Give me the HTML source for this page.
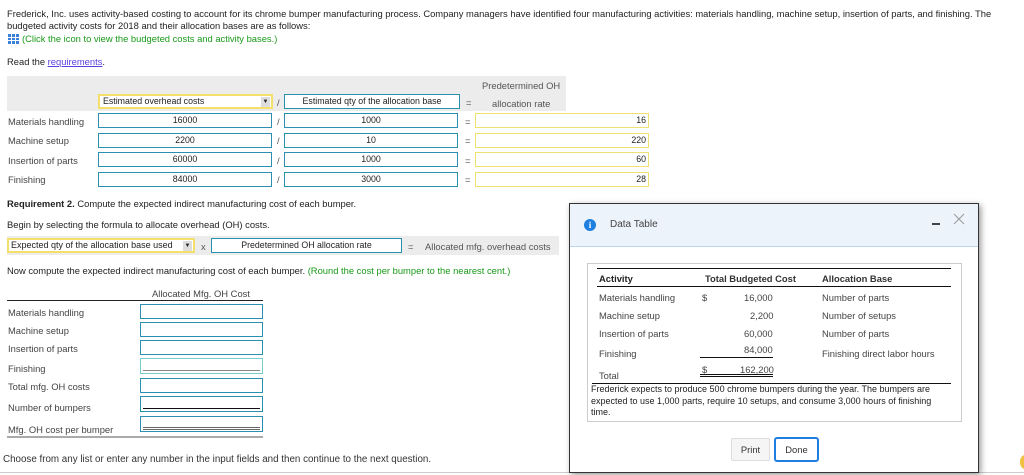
<!DOCTYPE html><html><head><style>
body{margin:0;width:1024px;height:475px;background:#fff;position:relative;overflow:hidden;font-family:"Liberation Sans",Arial,sans-serif;font-size:9.4px;color:#222}
.a{position:absolute;white-space:nowrap}
.in{position:absolute;box-sizing:border-box;border:1px solid #2a8fb0;background:#fff;height:15px;text-align:center;line-height:13px;font-size:8.8px}
.y{border:1px solid #f0e070}
.g{color:#555}
.t{color:#444}
</style></head><body>
<div class="a" style="left:7px;top:8px">Frederick, Inc. uses activity-based costing to account for its chrome bumper manufacturing process. Company managers have identified four manufacturing activities: materials handling, machine setup, insertion of parts, and finishing. The</div>
<div class="a" style="left:7px;top:20px">budgeted activity costs for 2018 and their allocation bases are as follows:</div>
<svg class="a" style="left:8px;top:34px" width="11" height="10"><rect x="0" y="0" width="11" height="10" fill="#3a7fd8"/><g stroke="#fff" stroke-width="1"><line x1="0" y1="3.5" x2="11" y2="3.5"/><line x1="0" y1="6.5" x2="11" y2="6.5"/><line x1="3.5" y1="0" x2="3.5" y2="10"/><line x1="7.5" y1="0" x2="7.5" y2="10"/></g></svg>
<div class="a" style="left:22px;top:33px;color:#1a9a1a">(Click the icon to view the budgeted costs and activity bases.)</div>
<div class="a" style="left:7px;top:56px">Read the <span style="color:#5a3ee0;text-decoration:underline">requirements</span>.</div>

<div class="a" style="left:7px;top:76px;width:559px;height:35px;background:#ececec"></div>
<div class="a g" style="left:482px;top:80px">Predetermined OH</div>
<div class="a g" style="left:492px;top:98px">allocation rate</div>
<div class="in y" style="left:98px;top:94px;width:175px;border:2px solid #f3df6a;text-align:left;padding-left:3px;line-height:11px">Estimated overhead costs<span style="position:absolute;right:1px;top:1px;width:9px;height:10px;background:#ddd;font-size:6px;line-height:10px;text-align:center">▼</span></div>
<div class="a g" style="left:277px;top:97px">/</div>
<div class="in" style="left:284px;top:94px;width:176px">Estimated qty of the allocation base</div>
<div class="a g" style="left:466px;top:97px">=</div>

<div class="a t" style="left:8px;top:116px">Materials handling</div>
<div class="a t" style="left:8px;top:135px">Machine setup</div>
<div class="a t" style="left:8px;top:155px">Insertion of parts</div>
<div class="a t" style="left:8px;top:174px">Finishing</div>
<div class="in" style="left:98px;top:113px;width:174px">16000</div>
<div class="in" style="left:98px;top:133px;width:174px">2200</div>
<div class="in" style="left:98px;top:152px;width:174px">60000</div>
<div class="in" style="left:98px;top:172px;width:174px">84000</div>
<div class="a g" style="left:277px;top:116px">/</div><div class="a g" style="left:277px;top:135px">/</div><div class="a g" style="left:277px;top:155px">/</div><div class="a g" style="left:277px;top:174px">/</div>
<div class="in" style="left:284px;top:113px;width:174px">1000</div>
<div class="in" style="left:284px;top:133px;width:174px">10</div>
<div class="in" style="left:284px;top:152px;width:174px">1000</div>
<div class="in" style="left:284px;top:172px;width:174px">3000</div>
<div class="a g" style="left:465px;top:116px">=</div><div class="a g" style="left:465px;top:135px">=</div><div class="a g" style="left:465px;top:155px">=</div><div class="a g" style="left:465px;top:174px">=</div>
<div class="in y" style="left:475px;top:113px;width:174px;text-align:right;padding-right:2px">16</div>
<div class="in y" style="left:475px;top:133px;width:174px;text-align:right;padding-right:2px">220</div>
<div class="in y" style="left:475px;top:152px;width:174px;text-align:right;padding-right:2px">60</div>
<div class="in y" style="left:475px;top:172px;width:174px;text-align:right;padding-right:2px">28</div>

<div class="a" style="left:7px;top:198px"><b>Requirement 2.</b> Compute the expected indirect manufacturing cost of each bumper.</div>
<div class="a" style="left:7px;top:219px">Begin by selecting the formula to allocate overhead (OH) costs.</div>
<div class="a" style="left:7px;top:236px;width:552px;height:19px;background:#ececec"></div>
<div class="in" style="left:7px;top:238px;width:188px;border:2px solid #f3df6a;text-align:left;padding-left:2px;line-height:11px;font-size:9px">Expected qty of the allocation base used<span style="position:absolute;right:1px;top:1px;width:9px;height:10px;background:#ddd;font-size:6px;line-height:10px;text-align:center">▼</span></div>
<div class="a g" style="left:201px;top:241px">x</div>
<div class="in" style="left:211px;top:238px;width:191px">Predetermined OH allocation rate</div>
<div class="a g" style="left:408px;top:241px">=</div>
<div class="a g" style="left:425px;top:241px">Allocated mfg. overhead costs</div>

<div class="a" style="left:7px;top:265px">Now compute the expected indirect manufacturing cost of each bumper. <span style="color:#1a9a1a">(Round the cost per bumper to the nearest cent.)</span></div>
<div class="a t" style="left:152px;top:288px">Allocated Mfg. OH Cost</div>
<div class="a" style="left:7px;top:300px;width:256px;height:1px;background:#222"></div>
<div class="a t" style="left:8px;top:307px">Materials handling</div>
<div class="a t" style="left:8px;top:325px">Machine setup</div>
<div class="a t" style="left:8px;top:343px">Insertion of parts</div>
<div class="a t" style="left:8px;top:363px">Finishing</div>
<div class="a t" style="left:8px;top:381px">Total mfg. OH costs</div>
<div class="a t" style="left:8px;top:402px">Number of bumpers</div>
<div class="a t" style="left:8px;top:424px">Mfg. OH cost per bumper</div>
<div class="in" style="left:140px;top:304px;width:123px"></div>
<div class="in" style="left:140px;top:322px;width:123px"></div>
<div class="in" style="left:140px;top:340px;width:123px"></div>
<div class="in" style="left:140px;top:358px;width:123px;height:16px;border-color:#7cc"><div style="position:absolute;left:2px;right:2px;top:11px;height:1px;background:#888"></div></div>
<div class="in" style="left:140px;top:378px;width:123px"></div>
<div class="in" style="left:140px;top:396px;width:123px;height:16px"><div style="position:absolute;left:2px;right:2px;top:11px;height:1px;background:#111"></div></div>
<div class="in" style="left:140px;top:416px;width:123px;height:16px"><div style="position:absolute;left:2px;right:2px;top:10px;height:3px;border-top:1px solid #666;border-bottom:1px solid #666;box-sizing:border-box"></div></div>
<div class="a" style="left:7px;top:436px;width:256px;height:2px;background:#aaa"></div>
<div class="a" style="left:3px;top:454px;font-size:9.8px;color:#333">Choose from any list or enter any number in the input fields and then continue to the next question.</div>
<div class="a" style="left:0;top:472px;width:1024px;height:1px;background:#ccc"></div>

<div class="a" style="left:569px;top:203px;width:410px;height:270px;box-sizing:border-box;border:1px solid #333;background:#fff;box-shadow:2px 2px 6px rgba(0,0,0,.4)"></div>
<div class="a" style="left:570px;top:204px;width:408px;height:42px;background:#edf3fb;border-bottom:1px solid #bcd6ef"></div>
<div class="a" style="left:584px;top:219px;width:12px;height:12px;border-radius:50%;background:#1f7fe0;color:#fff;font-weight:bold;font-size:9px;text-align:center;line-height:12px;font-family:'Liberation Serif',serif">i</div>
<div class="a" style="left:610px;top:219px;color:#444;font-size:10px">Data Table</div>
<div class="a" style="left:932px;top:223px;width:8px;height:2px;background:#444"></div>
<svg class="a" style="left:953px;top:213px" width="12" height="12"><path d="M1 1L11 11M11 1L1 11" stroke="#999" stroke-width="1"/></svg>
<div class="a" style="left:587px;top:263px;width:375px;height:159px;box-sizing:border-box;border:1px solid #ccc"></div>
<div class="a" style="left:597px;top:268px;width:354px;height:1px;background:#111"></div>
<div class="a" style="left:599px;top:273px;font-weight:bold;color:#222">Activity</div>
<div class="a" style="left:705px;top:273px;font-weight:bold;color:#333">Total Budgeted Cost</div>
<div class="a" style="left:822px;top:273px;font-weight:bold;color:#333">Allocation Base</div>
<div class="a" style="left:597px;top:286px;width:354px;height:1px;background:#111"></div>
<div class="a t" style="left:599px;top:292px">Materials handling</div><div class="a t" style="left:702px;top:292px">$</div><div class="a t" style="left:744px;top:292px">16,000</div><div class="a t" style="left:822px;top:292px">Number of parts</div>
<div class="a t" style="left:599px;top:310px">Machine setup</div><div class="a t" style="left:750px;top:310px">2,200</div><div class="a t" style="left:822px;top:310px">Number of setups</div>
<div class="a t" style="left:599px;top:328px">Insertion of parts</div><div class="a t" style="left:744px;top:328px">60,000</div><div class="a t" style="left:822px;top:328px">Number of parts</div>
<div class="a t" style="left:744px;top:344px">84,000</div>
<div class="a t" style="left:599px;top:348px">Finishing</div><div class="a t" style="left:822px;top:348px">Finishing direct labor hours</div>
<div class="a" style="left:700px;top:357px;width:73px;height:1px;background:#111"></div>
<div class="a t" style="left:702px;top:364px">$</div><div class="a t" style="left:740px;top:364px">162,200</div>
<div class="a" style="left:700px;top:374px;width:73px;height:3px;border-top:1px solid #111;border-bottom:1px solid #111;box-sizing:border-box"></div>
<div class="a t" style="left:599px;top:370px">Total</div>
<div class="a" style="left:592px;top:383px;width:359px;height:1px;background:#111"></div>
<div class="a" style="left:591px;top:384px;line-height:11.5px;color:#222;white-space:normal;width:362px;font-size:9px">Frederick expects to produce 500 chrome bumpers during the year. The bumpers are expected to use 1,000 parts, require 10 setups, and consume 3,000 hours of finishing time.</div>
<div class="a" style="left:731px;top:438px;width:39px;height:23px;box-sizing:border-box;border:1px solid #ddd;background:#f5f5f5;border-radius:2px;text-align:center;line-height:21px;color:#333">Print</div>
<div class="a" style="left:774px;top:437px;width:45px;height:25px;box-sizing:border-box;border:2px solid #1f7fe0;background:#fff;border-radius:3px;text-align:center;line-height:21px;color:#333">Done</div>
<div class="a" style="left:1020px;top:455px;width:10px;height:14px;border-radius:50%;background:#f0c040"></div>
</body></html>
